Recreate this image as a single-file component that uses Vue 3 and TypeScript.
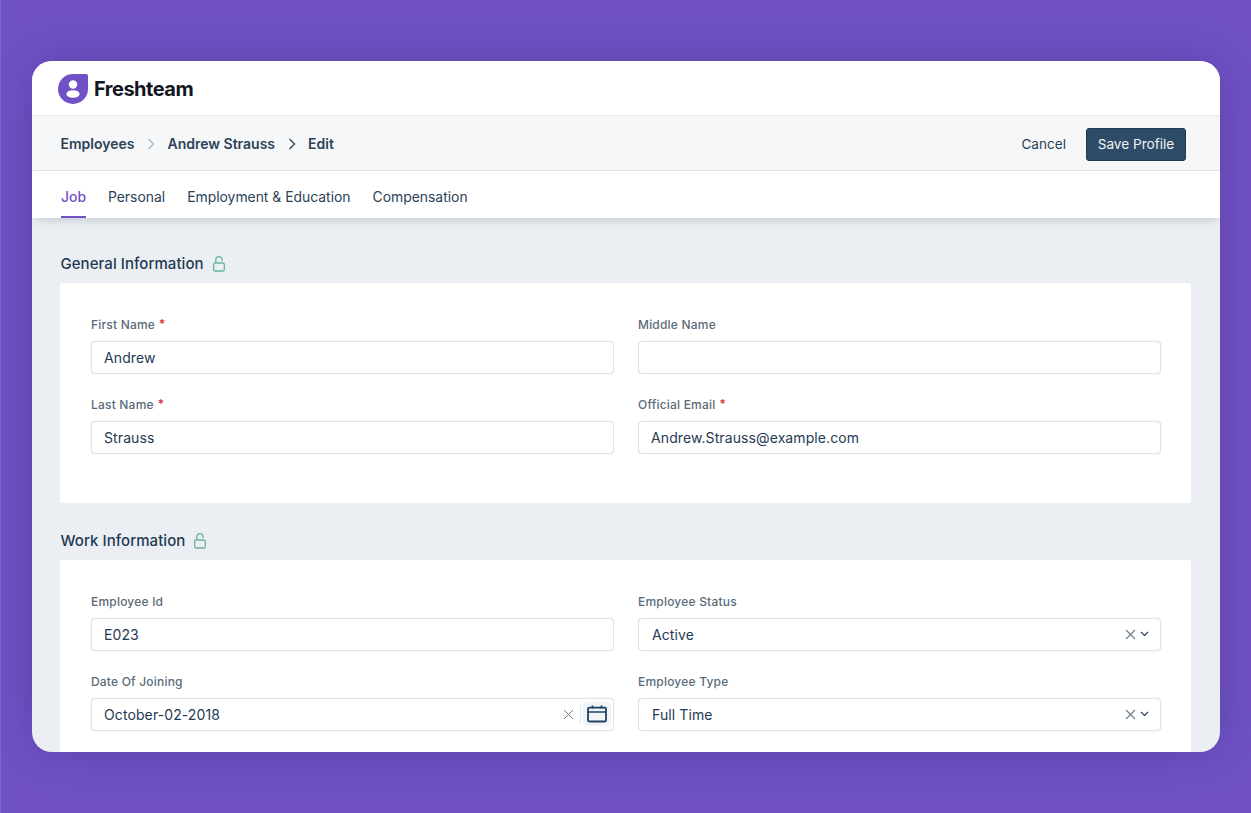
<script setup lang="ts">
interface Field {
  label: string;
  value: string;
  required?: boolean;
  kind?: 'text' | 'select' | 'date';
}
const tabs: string[] = ['Job', 'Personal', 'Employment & Education', 'Compensation'];
const general: Field[] = [
  { label: 'First Name', value: 'Andrew', required: true },
  { label: 'Middle Name', value: '' },
  { label: 'Last Name', value: 'Strauss', required: true },
  { label: 'Official Email', value: 'Andrew.Strauss@example.com', required: true },
];
const work: Field[] = [
  { label: 'Employee Id', value: 'E023' },
  { label: 'Employee Status', value: 'Active', kind: 'select' },
  { label: 'Date Of Joining', value: 'October-02-2018', kind: 'date' },
  { label: 'Employee Type', value: 'Full Time', kind: 'select' },
];
const sections = [
  { title: 'General Information', fields: general, cls: 'general' },
  { title: 'Work Information', fields: work, cls: 'work' },
];
</script>

<template>
  <div class="page">
    <div class="card">
      <header class="brand">
        <svg class="logo" width="30" height="30" viewBox="0 0 30 30">
          <path d="M15 0H28A2 2 0 0 1 30 2V15A15 15 0 0 1 0 15A15 15 0 0 1 15 0Z" fill="#7052C6" />
          <circle cx="15" cy="10.500" r="4.200" fill="#fff" />
          <ellipse cx="15" cy="20" rx="6.600" ry="3.800" fill="#fff" />
        </svg>
        <span class="brand-name">Freshteam</span>
      </header>
      <div class="crumbs">
        <span class="crumb">Employees</span>
        <svg class="chev" width="8" height="12" viewBox="0 0 8 12"><path d="M1.5 1 6.5 6 1.5 11" fill="none" stroke="#A9B4BF" stroke-width="1.2" /></svg>
        <span class="crumb">Andrew Strauss</span>
        <svg class="chev" width="8" height="12" viewBox="0 0 8 12"><path d="M1.5 1 6.5 6 1.5 11" fill="none" stroke="#2C4257" stroke-width="1.3" /></svg>
        <span class="crumb">Edit</span>
        <span class="cancel">Cancel</span>
        <button class="save">Save Profile</button>
      </div>
      <nav class="tabs">
        <span v-for="(t, i) in tabs" :key="t" class="tab" :class="{ active: i === 0 }">{{ t }}</span>
      </nav>
      <main class="content">
        <section v-for="s in sections" :key="s.title" class="section" :class="s.cls">
          <h2 class="title">
            {{ s.title }}
            <svg width="12" height="16" viewBox="0 0 12 16" class="lock">
              <rect x="0.7" y="7" width="10.6" height="8" rx="1.6" fill="none" stroke="#6BB596" stroke-width="1.3" />
              <path d="M2.800 7V3.800a3.100 3.100 0 0 1 6.200 0V5" fill="none" stroke="#6BB596" stroke-width="1.300" />
            </svg>
          </h2>
          <div class="panel">
            <div v-for="f in s.fields" :key="f.label" class="field">
              <label class="label">{{ f.label }}<span v-if="f.required" class="req">*</span></label>
              <div class="input" :class="f.kind">
                <span class="value">{{ f.value }}</span>
                <template v-if="f.kind === 'select'">
                  <svg class="x" width="11" height="11" viewBox="0 0 11 11"><path d="M1 1 10 10M10 1 1 10" stroke="#6F7C87" stroke-width="1.1" /></svg>
                  <svg class="down" width="9" height="6" viewBox="0 0 9 6"><path d="M1 1 4.500 4.500 8 1" fill="none" stroke="#2C4257" stroke-width="1.2" /></svg>
                </template>
                <template v-if="f.kind === 'date'">
                  <svg class="x" width="11" height="11" viewBox="0 0 11 11"><path d="M1 1 10 10M10 1 1 10" stroke="#6F7C87" stroke-width="1" /></svg>
                  <span class="divider"></span>
                  <span class="cal">
                    <svg width="20" height="18" viewBox="0 0 20 18">
                      <rect x="1" y="2.700" width="18" height="13.800" rx="1.200" fill="none" stroke="#1F4463" stroke-width="1.800" />
                      <path d="M1 7H19M5.500 .6V3.500M14.500 .6V3.500" stroke="#1F4463" stroke-width="1.700" />
                    </svg>
                  </span>
                </template>
              </div>
            </div>
          </div>
        </section>
      </main>
    </div>
  </div>
</template>

<style>
html, body { margin: 0; }
</style>

<style scoped>
.page {
  box-sizing: border-box;
  width: 1251px;
  height: 813px;
  padding: 61px 31px 61px 31px;
  background: #7052C6;
  border-left: 1px solid #7f64cf;
  font-family: Inter, "Liberation Sans", sans-serif;
  color: #1F3A52;
  overflow: hidden;
}
.card {
  height: 691px;
  border-radius: 20px;
  overflow: hidden;
  background: #EBEFF3;
  display: flex;
  flex-direction: column;
  box-shadow: 0 0 48px rgba(60, 40, 120, 0.38);
}
.brand {
  flex: none;
  box-sizing: border-box;
  height: 55px;
  background: #fff;
  border-bottom: 1px solid #E6EAEE;
  display: flex;
  align-items: center;
  padding-left: 26px;
  padding-top: 2px;
}
.logo { margin-right: 6px; }
.brand-name {
  font-size: 20px;
  font-weight: 700;
  letter-spacing: -0.5px;
  color: #12171F;
}
.crumbs {
  flex: none;
  box-sizing: border-box;
  height: 55px;
  background: #F5F7F9;
  border-bottom: 1px solid #DCE3E9;
  display: flex;
  align-items: center;
  padding: 0 34px 0 28.500px;
  font-size: 14px;
}
.crumb { font-weight: 600; color: #2C4257; }
.chev { margin: 1px 12px 0 13px; }
.cancel { margin-left: auto; color: #2C4257; margin-right: 20px; margin-top: 1px; font-size: 13.600px; }
.save {
  box-sizing: border-box;
  height: 33px;
  width: 100px;
  padding: 0;
  margin-top: 2px;
  border: 1px solid #1F3A52;
  border-radius: 3px;
  background: #2E4C68;
  color: #F0F3F6;
  font: 400 13.600px Inter, "Liberation Sans", sans-serif;
}
.tabs {
  flex: none;
  position: relative;
  box-sizing: border-box;
  height: 47px;
  background: #fff;
  display: flex;
  gap: 22px;
  padding-left: 29px;
  box-shadow: 0 5px 9px -3px rgba(40, 50, 70, 0.2);
  font-size: 13.900px;
  color: #2C4257;
}
.tab {
  box-sizing: border-box;
  height: 47px;
  line-height: 53px;
}
.tab.active {
  color: #7052C6;
  font-weight: 500;
  border-bottom: 2px solid #7052C6;
}
.content {
  flex: 1;
  min-height: 0;
  padding: 0 29px 0 28px;
}
.section { display: block; }
.section.general { padding-top: 36px; }
.section.work { padding-top: 28px; }
.title {
  margin: 0 0 9px;
  font-size: 15px;
  line-height: 20px;
  font-weight: 500;
  letter-spacing: 0.05px;
  color: #1F3A52;
  display: flex;
  align-items: center;
  gap: 9px;
  padding-left: 0.500px;
}
.panel {
  background: #fff;
  border-radius: 3px;
  display: grid;
  grid-template-columns: 522.500px 523px;
  column-gap: 24.500px;
  row-gap: 22.500px;
  padding: 33px 30px 49.500px 31px;
}
.field { display: flex; flex-direction: column; }
.label {
  font-size: 12px;
  line-height: 17px;
  height: 17px;
  font-weight: 500;
  letter-spacing: 0.2px;
  color: #5A6B7A;
  margin-bottom: 8px;
  display: block;
}
.req {
  color: #D72D30;
  margin-left: 4px;
  position: relative;
  top: -1px;
  font-size: 12px;
  line-height: 0;
}
.input {
  box-sizing: border-box;
  height: 32.500px;
  border: 1px solid #DFE4EA;
  border-radius: 4px;
  background: #fff;
  display: flex;
  align-items: center;
  padding: 0 12px;
  font-size: 14px;
  color: #1F3A52;
  box-shadow: 0 0 1px rgba(120, 140, 160, 0.35);
  letter-spacing: 0.1px;
}
.value { flex: 1; }
.input.select { padding: 0 11px 0 13px; }
.input.select .x { margin-right: 4px; }
.input.date { padding: 0 1.500px 0 12px; }
.input.date .x { margin-right: 6px; }
.divider { width: 1px; height: 20px; background: #E3E7EB; margin-right: 2px; }
.cal {
  width: 28px;
  height: 24px;
  background: #F2F5F8;
  border-radius: 4px;
  display: flex;
  align-items: center;
  justify-content: center;
}
</style>
